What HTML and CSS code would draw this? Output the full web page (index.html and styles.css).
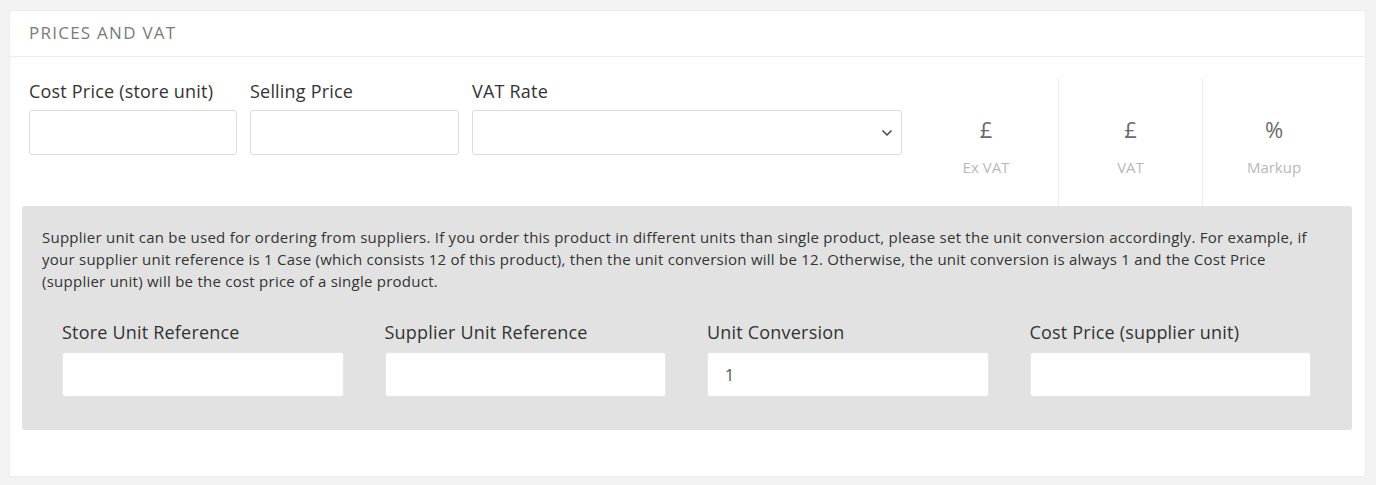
FILE: index.html
```html
<!DOCTYPE html>
<html>
<head>
<meta charset="utf-8">
<link rel="stylesheet" href="styles.css">
</head>
<body>
<div class="card">
  <div class="card-header">PRICES AND VAT</div>
  <div class="card-body">
    <div class="top-row">
      <div class="field f-cost">
        <label>Cost Price (store unit)</label>
        <input type="text" class="input">
      </div>
      <div class="field f-sell">
        <label>Selling Price</label>
        <input type="text" class="input">
      </div>
      <div class="field f-vat">
        <label>VAT Rate</label>
        <div class="select">
          <svg class="chev" width="12" height="8" viewBox="0 0 12 8"><path d="M1.5 1.5 L6 6 L10.5 1.5" fill="none" stroke="#444" stroke-width="1.5"/></svg>
        </div>
      </div>
      <div class="stats">
        <div class="stat">
          <div class="sym">£</div>
          <div class="sub">Ex VAT</div>
        </div>
        <div class="stat bordered">
          <div class="sym">£</div>
          <div class="sub">VAT</div>
        </div>
        <div class="stat bordered">
          <div class="sym">%</div>
          <div class="sub">Markup</div>
        </div>
      </div>
    </div>
    <div class="supplier">
      <p class="note">Supplier unit can be used for ordering from suppliers. If you order this product in different units than single product, please set the unit conversion accordingly. For example, if your supplier unit reference is 1 Case (which consists 12 of this product), then the unit conversion will be 12. Otherwise, the unit conversion is always 1 and the Cost Price (supplier unit) will be the cost price of a single product.</p>
      <div class="grid4">
        <div class="field">
          <label>Store Unit Reference</label>
          <input type="text" class="input flat">
        </div>
        <div class="field">
          <label>Supplier Unit Reference</label>
          <input type="text" class="input flat">
        </div>
        <div class="field">
          <label>Unit Conversion</label>
          <input type="text" class="input flat" value="1">
        </div>
        <div class="field">
          <label>Cost Price (supplier unit)</label>
          <input type="text" class="input flat">
        </div>
      </div>
    </div>
  </div>
</div>
</body>
</html>
```
FILE: styles.css
```css
html, body {
  margin: 0;
  padding: 0;
  background: #f3f3f3;
  font-family: "Open Sans", Lato, sans-serif;
  color: #333;
}
body {
  padding: 10px 10px 8px 9px;
}
.card {
  background: #fff;
  width: 1357px;
  height: 467px;
  box-sizing: border-box;
  border: 1px solid #ececec;
  border-radius: 2px;
}
.card-header {
  height: 46px;
  box-sizing: border-box;
  padding: 10px 0 0 19px;
  font-size: 17px;
  letter-spacing: 1.25px;
  color: #7a7a7a;
  border-bottom: 1px solid #ececec;
}
.card-body {
  padding: 0 13px 0 12px;
}
.top-row {
  display: flex;
  align-items: flex-start;
  padding-left: 7px;
}
.field {
  display: flex;
  flex-direction: column;
}
.field label {
  font-size: 18px;
  letter-spacing: 0.2px;
  line-height: 24px;
  color: #333;
  margin-bottom: 9px;
}
.top-row .field {
  padding-top: 22px;
}
.top-row .field label {
  margin-bottom: 7px;
}
.f-cost { width: 208px; margin-right: 13px; }
.f-sell { width: 209px; margin-right: 13px; }
.f-vat { width: 430px; }
.input {
  box-sizing: border-box;
  height: 45px;
  width: 100%;
  border: 1px solid #dcdcdc;
  border-radius: 3px;
  background: #fff;
  font-family: inherit;
  font-size: 16px;
  color: #555;
  padding: 0 17px;
  margin: 0;
  outline: none;
}
.select {
  box-sizing: border-box;
  height: 45px;
  border: 1px solid #dcdcdc;
  border-radius: 3px;
  display: flex;
  align-items: center;
  justify-content: flex-end;
  padding-right: 8px;
}
.stats {
  display: flex;
  margin-left: 12px;
  padding-top: 21px;
}
.stat {
  width: 144px;
  height: 128px;
  display: flex;
  flex-direction: column;
  align-items: center;
  box-sizing: border-box;
}
.stat.bordered {
  border-left: 1px solid #ececec;
}
.stat:last-child { width: 143px; }
.sym {
  font-size: 22px;
  color: #6a6a6a;
  margin-top: 37px;
  line-height: 28px;
}
.sub {
  font-size: 15px;
  color: #b8b8b8;
  margin-top: 14px;
}
.supplier {
  background: #e2e2e2;
  border-radius: 3px;
  height: 224px;
  box-sizing: border-box;
  padding: 20px 41px 0 20px;
}
.note {
  margin: 0;
  font-size: 15px;
  letter-spacing: 0.25px;
  line-height: 22px;
  color: #333;
}
.grid4 {
  display: grid;
  grid-template-columns: repeat(4, 1fr);
  gap: 41px;
  margin-top: 28px;
  margin-left: 20px;
}
.grid4 .field label {
  margin-bottom: 8px;
}
.input.flat {
  border: 1px solid #e6e6e6;
  height: 45px;
}
```
